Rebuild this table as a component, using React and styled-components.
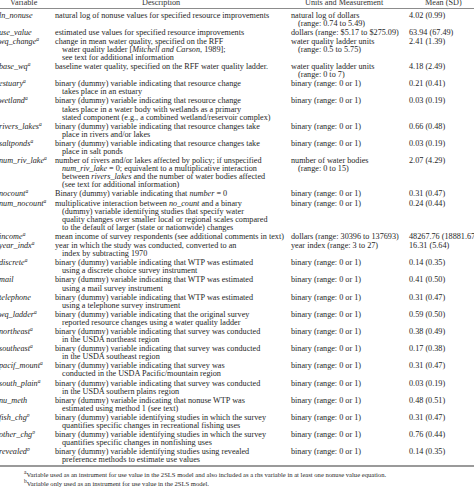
import React from 'react';
import styled, { createGlobalStyle } from 'styled-components';

const GlobalStyle = createGlobalStyle`
  html, body {
    margin: 0;
    padding: 0;
    background: #fff;
    overflow: hidden;
  }
  body {
    font-family: "Liberation Serif", "Times New Roman", serif;
    color: #262626;
  }
`;

const COLS = '55px 236px 118px 1fr';

const Page = styled.div`
  width: 474px;
  height: 497px;
  overflow: hidden;
  font-size: 8.2px;
  line-height: 8.1px;
`;

const Table = styled.div`
  width: 490px;
`;

const HeaderRow = styled.div`
  display: grid;
  grid-template-columns: ${COLS};
  height: 9px;
  margin-top: -1px;
  border-bottom: 1.5px solid #8c8c8c;
`;

const HeadCell = styled.div`
  padding-left: ${p => p.$pad}px;
  white-space: nowrap;
  color: #333;
`;

const Body = styled.div`
  padding-top: 2px;
`;

const Row = styled.div`
  display: grid;
  grid-template-columns: ${COLS};
  padding: 0.5px 0;
`;

const VarCell = styled.div`
  font-style: italic;
  white-space: nowrap;
  overflow: hidden;
  margin-left: -1px;
`;

const Cell = styled.div`
  white-space: nowrap;
`;

const Line = styled.div`
  padding-left: ${p => (p.$indent ? 7 : 0)}px;
`;

const Sup = styled.sup`
  font-size: 5.5px;
  line-height: 0;
  vertical-align: 3px;
`;

const Em = styled.i``;

const Footer = styled.div`
  margin-top: 0;
  border-top: 2px solid #9a9a9a;
  padding: 3px 0 0 24px;
  font-size: 6.6px;
`;

const Note = styled.div`
  white-space: nowrap;
  line-height: 9px;
`;

const BIN = ['binary (range: 0 or 1)'];
const dummy = 'binary (dummy) variable indicating that ';

const rows = [
  { name: 'ln_nonuse', desc: ['natural log of nonuse values for specified resource improvements'], units: ['natural log of dollars', '(range: 0.74 to 5.49)'], mean: '4.02 (0.99)' },
  { name: 'use_value', desc: ['estimated use values for specified resource improvements'], units: ['dollars (range: $5.17 to $275.09)'], mean: '63.94 (67.49)' },
  { name: 'wq_change', sup: 'a', desc: ['change in mean water quality, specified on the RFF', <>water quality ladder [<Em>Mitchell and Carson</Em>, 1989];</>, 'see text for additional information'], units: ['water quality ladder units', '(range: 0.5 to 5.75)'], mean: '2.41 (1.39)' },
  { name: 'base_wq', sup: 'a', desc: ['baseline water quality, specified on the RFF water quality ladder.'], units: ['water quality ladder units', '(range: 0 to 7)'], mean: '4.18 (2.49)' },
  { name: 'estuary', sup: 'a', desc: [dummy + 'resource change', 'takes place in an estuary'], units: BIN, mean: '0.21 (0.41)' },
  { name: 'wetland', sup: 'a', desc: [dummy + 'resource change', 'takes place in a water body with wetlands as a primary', 'stated component (e.g., a combined wetland/reservoir complex)'], units: BIN, mean: '0.03 (0.19)' },
  { name: 'rivers_lakes', sup: 'a', desc: [dummy + 'resource changes take', 'place in rivers and/or lakes'], units: BIN, mean: '0.66 (0.48)' },
  { name: 'saltponds', sup: 'a', desc: [dummy + 'resource changes take', 'place in salt ponds'], units: BIN, mean: '0.03 (0.19)' },
  { name: 'num_riv_lake', sup: 'a', desc: ['number of rivers and/or lakes affected by policy; if unspecified', <><Em>num_riv_lake</Em> = 0; equivalent to a multiplicative interaction</>, <>between <Em>rivers_lakes</Em> and the number of water bodies affected</>, '(see text for additional information)'], units: ['number of water bodies', '(range: 0 to 15)'], mean: '2.07 (4.29)' },
  { name: 'nocount', sup: 'a', desc: [<>Binary (dummy) variable indicating that <Em>number</Em> = 0</>], units: BIN, mean: '0.31 (0.47)' },
  { name: 'num_nocount', sup: 'a', desc: [<>multiplicative interaction between <Em>no_count</Em> and a binary</>, '(dummy) variable identifying studies that specify water', 'quality changes over smaller local or regional scales compared', 'to the default of larger (state or nationwide) changes'], units: BIN, mean: '0.24 (0.44)' },
  { name: 'income', sup: 'a', desc: ['mean income of survey respondents (see additional comments in text)'], units: ['dollars (range: 30396 to 137693)'], mean: '48267.76 (18881.67)' },
  { name: 'year_indx', sup: 'a', desc: ['year in which the study was conducted, converted to an', 'index by subtracting 1970'], units: ['year index (range: 3 to 27)'], mean: '16.31 (5.64)' },
  { name: 'discrete', sup: 'a', desc: [dummy + 'WTP was estimated', 'using a discrete choice survey instrument'], units: BIN, mean: '0.14 (0.35)' },
  { name: 'mail', desc: [dummy + 'WTP was estimated', 'using a mail survey instrument'], units: BIN, mean: '0.41 (0.50)' },
  { name: 'telephone', desc: [dummy + 'WTP was estimated', 'using a telephone survey instrument'], units: BIN, mean: '0.31 (0.47)' },
  { name: 'wq_ladder', sup: 'a', desc: [dummy + 'the original survey', 'reported resource changes using a water quality ladder'], units: BIN, mean: '0.59 (0.50)' },
  { name: 'northeast', sup: 'a', desc: [dummy + 'survey was conducted', 'in the USDA northeast region'], units: BIN, mean: '0.38 (0.49)' },
  { name: 'southeast', sup: 'a', desc: [dummy + 'survey was conducted', 'in the USDA southeast region'], units: BIN, mean: '0.17 (0.38)' },
  { name: 'pacif_mount', sup: 'a', desc: [dummy + 'survey was', 'conducted in the USDA Pacific/mountain region'], units: BIN, mean: '0.31 (0.47)' },
  { name: 'south_plain', sup: 'a', desc: [dummy + 'survey was conducted', 'in the USDA southern plains region'], units: BIN, mean: '0.03 (0.19)' },
  { name: 'nu_meth', desc: [dummy + 'nonuse WTP was', 'estimated using method 1 (see text)'], units: BIN, mean: '0.48 (0.51)' },
  { name: 'fish_chg', sup: 'b', desc: ['binary (dummy) variable identifying studies in which the survey', 'quantifies specific changes in recreational fishing uses'], units: BIN, mean: '0.31 (0.47)' },
  { name: 'other_chg', sup: 'b', desc: ['binary (dummy) variable identifying studies in which the survey', 'quantifies specific changes in nonfishing uses'], units: BIN, mean: '0.76 (0.44)' },
  { name: 'revealed', sup: 'b', desc: ['binary (dummy) variable identifying studies using revealed', 'preference methods to estimate use values'], units: BIN, mean: '0.14 (0.35)' },
];

const Lines = ({ items }) => (
  <Cell>
    {items.map((t, i) => (
      <Line key={i} $indent={i > 0}>{t}</Line>
    ))}
  </Cell>
);

const App = () => {
  return (
    <Page>
      <GlobalStyle />
      <Table>
        <HeaderRow>
          <HeadCell $pad={10}>Variable</HeadCell>
          <HeadCell $pad={87}>Description</HeadCell>
          <HeadCell $pad={14}>Units and Measurement</HeadCell>
          <HeadCell $pad={16}>Mean (SD)</HeadCell>
        </HeaderRow>
        <Body>
          {rows.map(r => (
            <Row key={r.name}>
              <VarCell>
                {r.name}
                {r.sup && <Sup>{r.sup}</Sup>}
              </VarCell>
              <Lines items={r.desc} />
              <Lines items={r.units} />
              <Cell>{r.mean}</Cell>
            </Row>
          ))}
        </Body>
        <Footer>
          <Note><Sup>a</Sup>Variable used as an instrument for use value in the 2SLS model and also included as a rhs variable in at least one nonuse value equation.</Note>
          <Note><Sup>b</Sup>Variable only used as an instrument for use value in the 2SLS model.</Note>
        </Footer>
      </Table>
    </Page>
  );
};

export default App;
